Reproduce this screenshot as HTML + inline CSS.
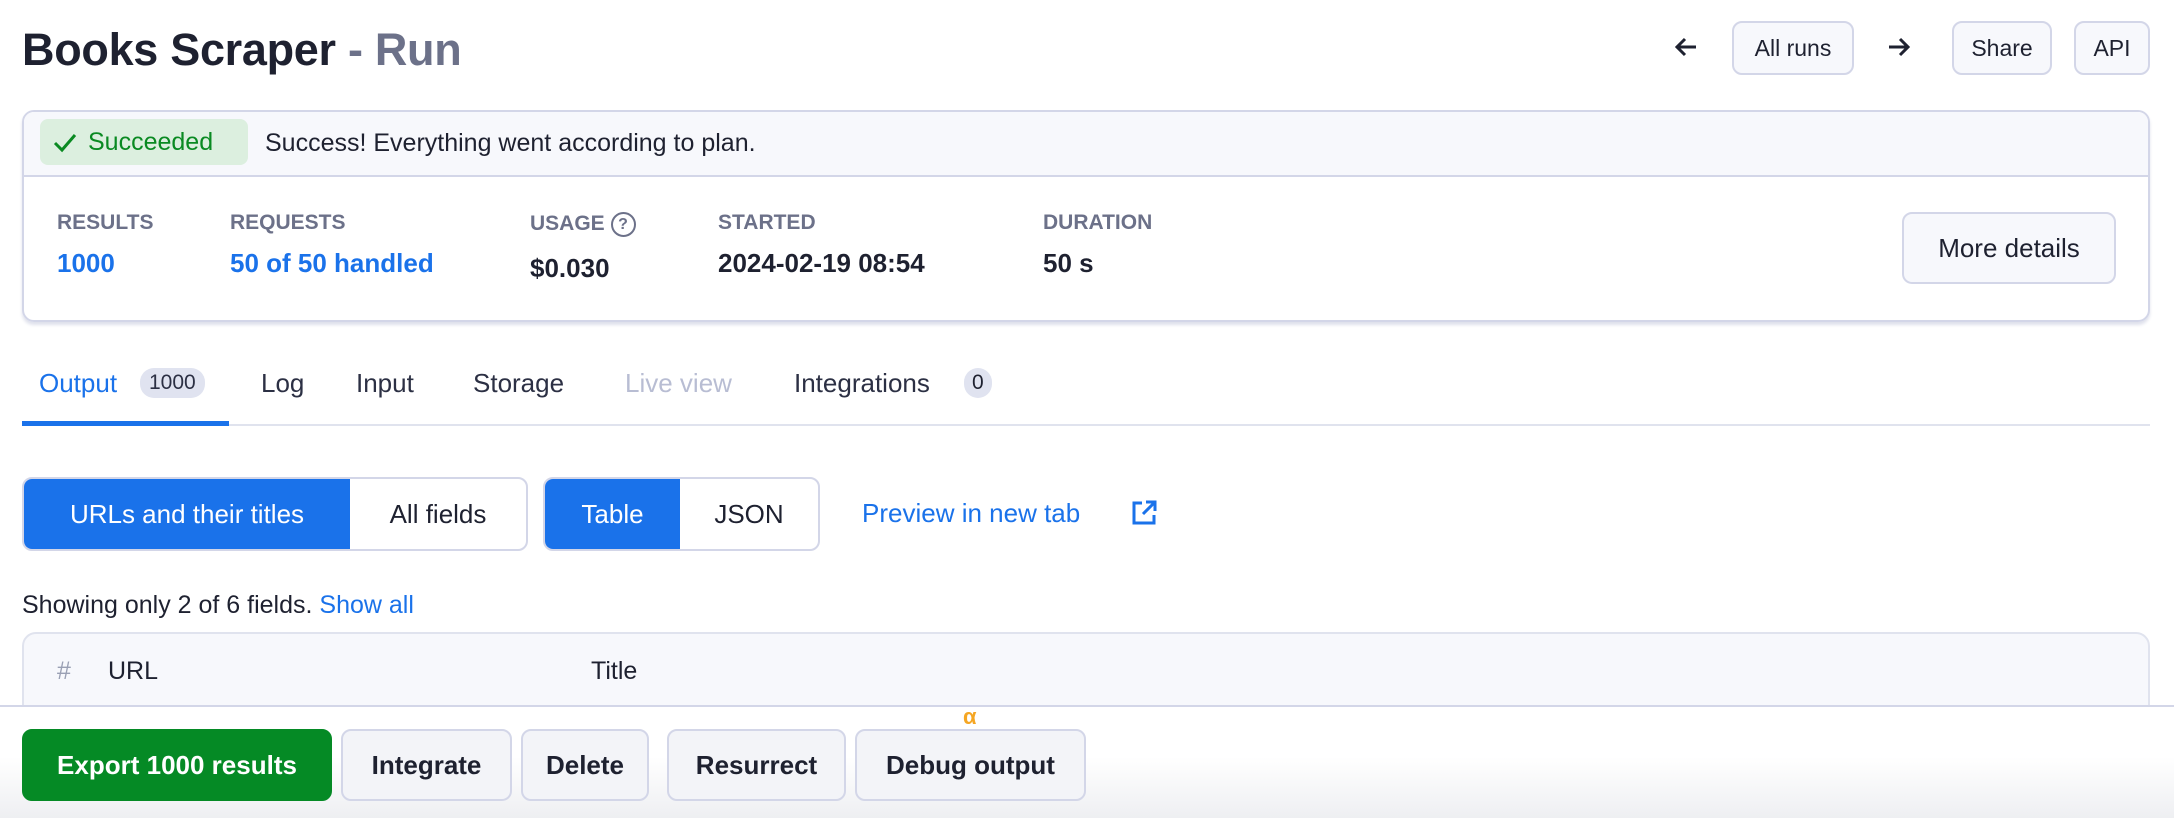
<!DOCTYPE html>
<html><head><meta charset="utf-8"><style>
*{box-sizing:border-box;margin:0;padding:0}
body{width:2174px;height:818px;overflow:hidden;background:#fff;font-family:"Liberation Sans",sans-serif;color:#1e2130;position:relative}
.a{position:absolute;white-space:nowrap}
.btn{position:absolute;border:2px solid #d3d6e8;background:#f7f8fc;border-radius:10px;display:flex;align-items:center;justify-content:center;font-size:23px;color:#1e2130}
.lbl{font-size:21px;font-weight:bold;color:#6c7189}
.val{font-size:26px;font-weight:bold}
.tab{font-size:26px;color:#2c3044;top:368px}
.badge{background:#e0e3f0;border-radius:14px;font-size:21px;padding:3px 9px}
.seg{position:absolute;border:2px solid #d3d6e8;border-radius:10px;display:flex;overflow:hidden;top:477px;height:74px}
.seg div{display:flex;align-items:center;justify-content:center;font-size:26px}
.on{background:#1a72ea;color:#fff}
.bb{position:absolute;top:729px;height:72px;border:2px solid #d3d6e8;background:#f3f4f8;border-radius:10px;display:flex;align-items:center;justify-content:center;font-size:26px;font-weight:bold;color:#1e2130}
</style></head><body>
<div class="a" style="left:22px;top:24px;font-size:45px;font-weight:bold;letter-spacing:-0.3px">Books Scraper <span style="color:#6c7189">- Run</span></div>
<svg class="a" style="left:1674px;top:36px" width="24" height="22" viewBox="0 0 24 22"><path d="M22 11H3M11 3L3 11l8 8" fill="none" stroke="#1e2130" stroke-width="3"/></svg>
<div class="btn" style="left:1732px;top:21px;width:122px;height:54px">All runs</div>
<svg class="a" style="left:1887px;top:36px" width="24" height="22" viewBox="0 0 24 22"><path d="M2 11h19M13 3l8 8-8 8" fill="none" stroke="#1e2130" stroke-width="3"/></svg>
<div class="btn" style="left:1952px;top:21px;width:100px;height:54px">Share</div>
<div class="btn" style="left:2074px;top:21px;width:76px;height:54px">API</div>

<div class="a" style="left:22px;top:110px;width:2128px;height:212px;border:2px solid #d3d6e8;border-radius:12px;box-shadow:0 3px 3px #dfe1ec;overflow:hidden">
 <div style="height:65px;background:#f7f8fc;border-bottom:2px solid #d3d6e8"></div>
</div>
<div class="a" style="left:40px;top:119px;width:208px;height:46px;background:#dcefdf;border-radius:8px;color:#0a8a22;font-size:25px;display:flex;align-items:center;padding-left:12px">
<svg width="26" height="22" viewBox="0 0 26 22"><path d="M3 12l7 7L23 4" fill="none" stroke="#0a8a22" stroke-width="3"/></svg><span style="margin-left:10px">Succeeded</span></div>
<div class="a" style="left:265px;top:129px;font-size:25px">Success! Everything went according to plan.</div>

<div class="a lbl" style="left:57px;top:211px">RESULTS</div>
<div class="a val" style="left:57px;top:248px;color:#1a72ea">1000</div>
<div class="a lbl" style="left:230px;top:211px">REQUESTS</div>
<div class="a val" style="left:230px;top:248px;color:#1a72ea">50 of 50 handled</div>
<div class="a lbl" style="left:530px;top:212px">USAGE <span style="display:inline-block;width:25px;height:25px;border:2px solid #6c7189;border-radius:50%;font-size:16px;text-align:center;line-height:22px;vertical-align:middle">?</span></div>
<div class="a val" style="left:530px;top:253px">$0.030</div>
<div class="a lbl" style="left:718px;top:211px">STARTED</div>
<div class="a val" style="left:718px;top:248px">2024-02-19 08:54</div>
<div class="a lbl" style="left:1043px;top:211px">DURATION</div>
<div class="a val" style="left:1043px;top:248px">50 s</div>
<div class="btn" style="left:1902px;top:212px;width:214px;height:72px;font-size:26px">More details</div>

<div class="a tab" style="left:39px;color:#1a72ea">Output</div>
<div class="a badge" style="left:140px;top:368px;color:#2c3044">1000</div>
<div class="a tab" style="left:261px">Log</div>
<div class="a tab" style="left:356px">Input</div>
<div class="a tab" style="left:473px">Storage</div>
<div class="a tab" style="left:625px;color:#b8bdd3">Live view</div>
<div class="a tab" style="left:794px">Integrations</div>
<div class="a badge" style="left:964px;top:368px;padding:3px 8px">0</div>
<div class="a" style="left:22px;top:424px;width:2128px;height:2px;background:#e0e3ee"></div>
<div class="a" style="left:22px;top:421px;width:207px;height:5px;background:#1a72ea"></div>

<div class="seg" style="left:22px;width:506px"><div class="on" style="width:326px">URLs and their titles</div><div style="flex:1">All fields</div></div>
<div class="seg" style="left:543px;width:277px"><div class="on" style="width:135px">Table</div><div style="flex:1">JSON</div></div>
<div class="a" style="left:862px;top:498px;font-size:26px;color:#1a72ea">Preview in new tab</div>
<svg class="a" style="left:1130px;top:499px" width="28" height="28" viewBox="0 0 28 28"><path d="M12 4H4v20h20v-8M16 3h9v9M25 3L13 15" fill="none" stroke="#1a72ea" stroke-width="3"/></svg>

<div class="a" style="left:22px;top:591px;font-size:25px">Showing only 2 of 6 fields. <span style="color:#1a72ea">Show all</span></div>
<div class="a" style="left:22px;top:632px;width:2128px;height:120px;border:2px solid #e0e3ee;border-radius:14px;background:#f7f8fc"></div>
<div class="a" style="left:57px;top:657px;font-size:25px;color:#9aa0b4">#</div>
<div class="a" style="left:108px;top:657px;font-size:25px">URL</div>
<div class="a" style="left:591px;top:657px;font-size:25px">Title</div>

<div class="a" style="left:0;top:705px;width:2174px;height:113px;background:linear-gradient(#fff 0%,#fff 45%,#eeeff2 100%);border-top:2px solid #d3d6e8"></div>
<div class="bb" style="left:22px;width:310px;background:#058a25;border-color:#058a25;color:#fff">Export 1000 results</div>
<div class="bb" style="left:341px;width:171px">Integrate</div>
<div class="bb" style="left:521px;width:128px">Delete</div>
<div class="bb" style="left:667px;width:179px">Resurrect</div>
<div class="bb" style="left:855px;width:231px">Debug output</div>
<div class="a" style="left:963px;top:704px;font-size:22px;font-weight:bold;color:#f5a623">α</div>
</body></html>
